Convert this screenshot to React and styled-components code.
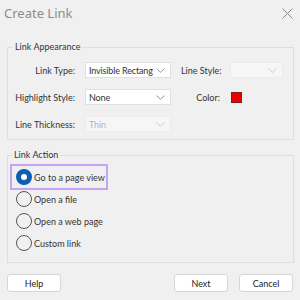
import styled, { createGlobalStyle } from "styled-components";

const GlobalStyle = createGlobalStyle`
  html, body {
    margin: 0;
    padding: 0;
    background: #f0f0f0;
  }
  body {
    font-family: Lato, "Noto Sans", sans-serif;
    font-size: 9px;
    color: #333;
  }
`;

const Dialog = styled.div`
  width: 300px;
  height: 300px;
  display: flex;
  flex-direction: column;
  background: #f0f0f0;
  box-sizing: border-box;
`;

const TitleBar = styled.div`
  height: 26px;
  display: flex;
  align-items: center;
  justify-content: space-between;
  padding: 0 7px 0 4px;
`;

const Title = styled.span`
  font-family: "Noto Sans", sans-serif;
  font-size: 13px;
  color: #8c8c8c;
`;

const Body = styled.div`
  display: flex;
  flex-direction: column;
  gap: 9px;
  padding: 15px 6px 0 7px;
`;

const Group = styled.fieldset`
  margin: 0;
  border: 1px solid #dedede;
  padding: ${(p) => p.$pad};
  min-width: 0;
  height: ${(p) => p.$h}px;
  box-sizing: border-box;
`;

const Legend = styled.legend`
  color: #333;
  padding: 0 2px;
  margin-left: 4px;
  line-height: 12px;
`;

const FormGrid = styled.div`
  display: grid;
  grid-template-columns: 66px 86px 39px 53px;
  grid-auto-rows: 16px;
  column-gap: 10px;
  row-gap: 11px;
  align-items: center;
`;

const Label = styled.span`
  text-align: right;
  white-space: nowrap;
  color: #333;
`;

const Select = styled.div`
  height: 16px;
  box-sizing: border-box;
  display: flex;
  align-items: center;
  justify-content: space-between;
  gap: 2px;
  padding: 0 5px 0 3px;
  background: ${(p) => (p.$disabled ? "#f6f6f6" : "#ffffff")};
  border: 1px solid ${(p) => (p.$disabled ? "#ececec" : "#e0e0e0")};
  color: ${(p) => (p.$disabled ? "#b4b4b4" : "#333")};
  white-space: nowrap;
`;

const SelectText = styled.span`
  letter-spacing: -0.15px;
`;

const Swatch = styled.div`
  width: 9px;
  height: 9px;
  background: #ee0000;
  border: 1px solid #7a2020;
  margin-left: 1px;
`;

const RadioList = styled.div`
  display: flex;
  flex-direction: column;
`;

const RadioRow = styled.label`
  display: flex;
  align-items: center;
  gap: 2px;
  height: 22px;
  width: 94px;
  box-sizing: border-box;
  margin-left: 4px;
  padding-left: 4px;
  outline: ${(p) => (p.$focused ? "2px solid #c9a3f3" : "none")};
  color: #333;
  white-space: nowrap;
`;

const RadioDot = styled.span`
  width: 16px;
  height: 16px;
  box-sizing: border-box;
  border-radius: 50%;
  flex: none;
  border: ${(p) => (p.$checked ? "5px solid #0a5fb4" : "1px solid #555")};
  background: ${(p) => (p.$checked ? "#ffffff" : "transparent")};
`;

const Footer = styled.div`
  display: flex;
  align-items: center;
  padding: 11px 7px 0 7px;
  gap: 11px;
`;

const Button = styled.button`
  width: 54px;
  height: 18px;
  padding: 0;
  font-family: Lato, "Noto Sans", sans-serif;
  font-size: 9px;
  color: #222;
  background: #ffffff;
  border: 1px solid #d6d6d6;
  border-radius: 3px;
  margin-left: ${(p) => (p.$push ? "auto" : "0")};
`;

const Chevron = ({ color = "#8a8a8a" }) => (
  <svg width="9" height="5" viewBox="0 0 9 5" style={{ flex: "none" }}>
    <path d="M0.5 0.5 L4.5 4.3 L8.5 0.5" fill="none" stroke={color} strokeWidth="0.9" />
  </svg>
);

const CloseIcon = () => (
  <svg width="11" height="11" viewBox="0 0 11 11">
    <path d="M0.5 0.5 L10.5 10.5 M10.5 0.5 L0.5 10.5" stroke="#8a8a8a" strokeWidth="1" />
  </svg>
);

const actions = ["Go to a page view", "Open a file", "Open a web page", "Custom link"];

export default function App() {
  return (
    <Dialog>
      <GlobalStyle />
      <TitleBar>
        <Title>Create Link</Title>
        <CloseIcon />
      </TitleBar>
      <Body>
        <Group $h={99} $pad="9px 0 0 1px">
          <Legend>Link Appearance</Legend>
          <FormGrid>
            <Label>Link Type:</Label>
            <Select>
              <SelectText>Invisible Rectang</SelectText>
              <Chevron />
            </Select>
            <Label>Line Style:</Label>
            <Select $disabled>
              <span />
              <Chevron color="#c8c8c8" />
            </Select>

            <Label>Highlight Style:</Label>
            <Select>
              <SelectText>None</SelectText>
              <Chevron />
            </Select>
            <Label>Color:</Label>
            <Swatch />

            <Label>Line Thickness:</Label>
            <Select $disabled>
              <SelectText>Thin</SelectText>
              <Chevron color="#c8c8c8" />
            </Select>
          </FormGrid>
        </Group>
        <Group $h={114} $pad="5px 0 0 0">
          <Legend>Link Action</Legend>
          <RadioList>
            {actions.map((a, i) => (
              <RadioRow key={a} $focused={i === 0}>
                <RadioDot $checked={i === 0} />
                {a}
              </RadioRow>
            ))}
          </RadioList>
        </Group>
      </Body>
      <Footer>
        <Button>Help</Button>
        <Button $push>Next</Button>
        <Button>Cancel</Button>
      </Footer>
    </Dialog>
  );
}
